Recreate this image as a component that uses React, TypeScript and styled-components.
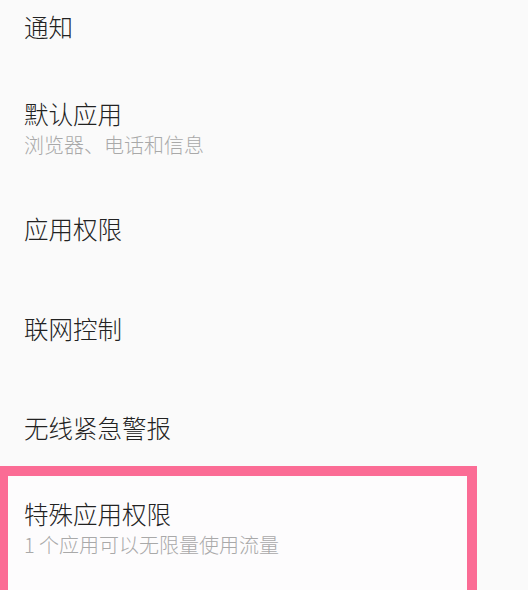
import React from "react";
import styled, { createGlobalStyle } from "styled-components";

const Global = createGlobalStyle`
  html, body {
    margin: 0;
    padding: 0;
    background: #fafafa;
  }
  body {
    font-family: "Noto Sans CJK SC", "Noto Sans", sans-serif;
    -webkit-font-smoothing: antialiased;
  }
`;

const Screen = styled.div`
  width: 528px;
  height: 590px;
  overflow: hidden;
  background: #fafafa;
  display: flex;
  flex-direction: column;
`;

const Row = styled.div<{ $h?: number; $pt?: number }>`
  flex: none;
  box-sizing: border-box;
  height: ${(p) => (p.$h ? `${p.$h}px` : "auto")};
  padding: ${(p) => p.$pt ?? 35}px 24px 0 24px;
  display: flex;
  flex-direction: column;
`;

const Title = styled.div`
  font-size: 24.5px;
  font-weight: 300;
  line-height: 30px;
  color: #222222;
  white-space: nowrap;
`;

const Sub = styled.div`
  margin-top: 3px;
  font-size: 20px;
  font-weight: 300;
  line-height: 26px;
  color: #a9a9a9;
  white-space: nowrap;
`;

const Highlight = styled.div`
  flex: 1;
  width: 477px;
  box-sizing: border-box;
  border-style: solid;
  border-color: #fb6c95;
  border-width: 10px 10px 0 8px;
  background: #fdfcfd;
  display: flex;
  flex-direction: column;
`;

const HighlightRow = styled.div`
  padding: 23px 16px 0 16px;
  display: flex;
  flex-direction: column;
`;

export default function App() {
  return (
    <>
      <Global />
      <Screen>
        <Row $h={64} $pt={12}>
          <Title>通知</Title>
        </Row>
        <Row $h={114.5} $pt={35}>
          <Title>默认应用</Title>
          <Sub>浏览器、电话和信息</Sub>
        </Row>
        <Row $h={100} $pt={35}>
          <Title>应用权限</Title>
        </Row>
        <Row $h={100} $pt={35}>
          <Title>联网控制</Title>
        </Row>
        <Row $h={87.5} $pt={34}>
          <Title>无线紧急警报</Title>
        </Row>
        <Highlight>
          <HighlightRow>
            <Title>特殊应用权限</Title>
            <Sub>1 个应用可以无限量使用流量</Sub>
          </HighlightRow>
        </Highlight>
      </Screen>
    </>
  );
}
